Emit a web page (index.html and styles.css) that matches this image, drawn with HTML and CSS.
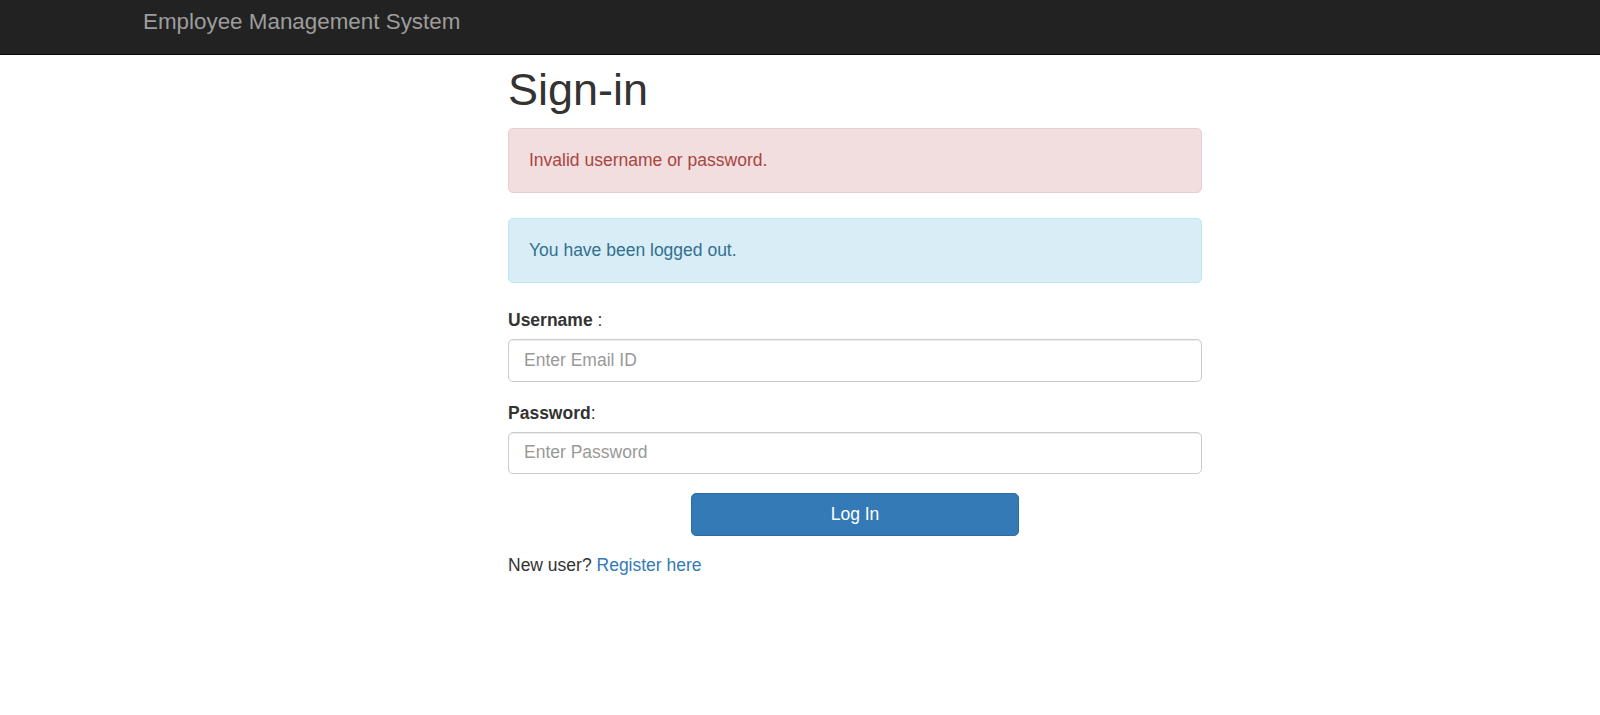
FILE: index.html
```html
<!DOCTYPE html>
<html lang="en">
<head>
<meta charset="utf-8">
<title>Sign-in</title>
<link rel="stylesheet" href="styles.css">
</head>
<body>
<nav class="navbar">
  <a class="brand" href="#">Employee Management System</a>
</nav>
<main class="page">
  <h1 class="title">Sign-in</h1>
  <div class="alert alert-danger">Invalid username or password.</div>
  <div class="alert alert-info">You have been logged out.</div>
  <form class="form">
    <div class="form-group">
      <label class="label" for="username"><b>Username</b> :</label>
      <input class="input" id="username" type="text" placeholder="Enter Email ID">
    </div>
    <div class="form-group">
      <label class="label" for="password"><b>Password</b>:</label>
      <input class="input" id="password" type="password" placeholder="Enter Password">
    </div>
    <div class="form-actions">
      <button class="btn" type="button">Log In</button>
    </div>
  </form>
  <p class="register">New user? <a href="#" class="link">Register here</a></p>
</main>
</body>
</html>
```

FILE: styles.css
```css
* { box-sizing: border-box; }
html, body { margin: 0; padding: 0; }
body {
  font-family: "Liberation Sans", Arial, Helvetica, sans-serif;
  font-size: 17.5px;
  line-height: 25px;
  color: #333;
  background: #fff;
}
.navbar {
  height: 55px;
  background: #222;
  border-bottom: 1px solid #080808;
  padding-left: 143px;
  padding-top: 9px;
}
.brand {
  display: inline-block;
  font-size: 22.4px;
  line-height: 25px;
  color: #9d9d9d;
  text-decoration: none;
}
.page {
  width: 694px;
  margin-left: 508px;
}
.title {
  font-size: 45px;
  font-weight: 500;
  line-height: 49px;
  margin: 10px 0 14px;
}
.alert {
  border: 1px solid transparent;
  border-radius: 5px;
  padding: 19px 20px 20px 20px;
  line-height: 24px;
  margin-bottom: 25px;
}
.alert-danger { background: #f2dede; border-color: #ebccd1; color: #a94442; }
.alert-info { background: #d9edf7; border-color: #bce8f1; color: #31708f; }
.form-group { margin-bottom: 19px; }
.label {
  display: block;
  margin-bottom: 6px;
  font-weight: normal;
}
.label b { font-weight: bold; }
.input {
  display: block;
  width: 100%;
  height: 42.5px;
  padding: 0 15px;
  font-family: inherit;
  font-size: 17.5px;
  color: #555;
  border: 1px solid #ccc;
  border-radius: 5px;
  box-shadow: inset 0 1px 1px rgba(0,0,0,.075);
  outline: none;
}
.input::placeholder { color: #999; }
.form-actions {
  display: flex;
  justify-content: center;
}
.btn {
  width: 328px;
  height: 42.5px;
  background: #337ab7;
  border: 1px solid #2e6da4;
  border-radius: 5px;
  color: #fff;
  font-family: inherit;
  font-size: 17.5px;
  cursor: pointer;
}
.register { margin: 17.5px 0 0; }
.link { color: #337ab7; text-decoration: none; }
```
